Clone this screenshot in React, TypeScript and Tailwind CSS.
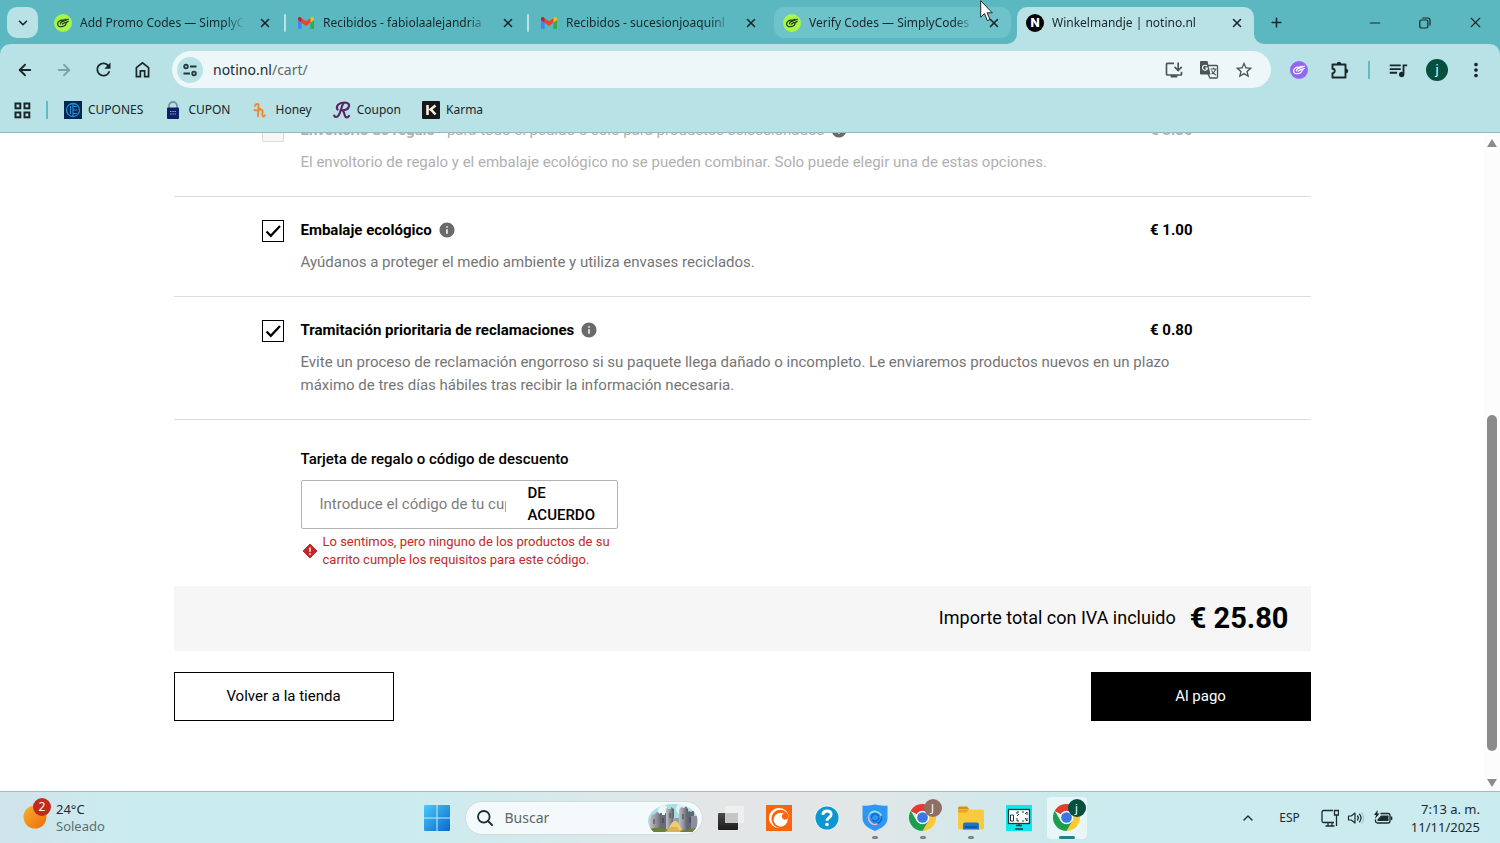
import type { ReactNode } from 'react';
import { ArrowLeft, ArrowRight, ChevronDown, ChevronUp, Minus, Plus, X } from 'lucide-react';
import { MdInfo, MdMoreVert, MdOutlineInstallDesktop, MdQueueMusic, MdRefresh, MdStarBorder } from 'react-icons/md';
import { SiCrunchyroll } from 'react-icons/si';

/* ---------- logos ---------- */

function SimplyCodesLogo({ className, tone = 'green' }: { className?: string; tone?: 'green' | 'purple' }) {
  const bg = tone === 'green' ? '#a8f64a' : '#9466f5';
  const ink = tone === 'green' ? '#1d3a1c' : '#ffffff';
  return (
    <svg viewBox="0 0 18 18" className={className} aria-hidden="true">
      <circle cx="9" cy="9" r="9" fill={bg} />
      <g fill="none" stroke={ink} strokeWidth="1.2" strokeLinecap="round" strokeLinejoin="round">
        <path d="M9.400 6.400C6.400 5.600 3.600 7.600 3.600 9.800c0 2.400 2 3.200 4 2.900 2.600-.4 4.600-2.100 4.500-4" />
        <path d="M6.400 9.800c.2-1.600 1.600-2.400 3-2.600L14.300 5.200" />
        <path d="M8.200 10.200l2.600-1.800M9.400 6.400l2.600-1.200M12 8.600l2.200-1.200" />
      </g>
    </svg>
  );
}

function GmailLogo({ className }: { className?: string }) {
  return (
    <svg viewBox="0 0 24 18" className={className} aria-hidden="true">
      <path d="M1.600 18h3.900V8.700L0 4.500v11.900C0 17.300.7 18 1.600 18z" fill="#4285f4" />
      <path d="M18.500 18h3.900c.9 0 1.600-.7 1.600-1.600V4.500l-5.500 4.200z" fill="#34a853" />
      <path d="M18.500 1.700v7L24 4.500V2.400c0-2-2.300-3.200-3.900-2z" fill="#fbbc04" />
      <path d="M5.500 8.700v-7L12 6.500l6.500-4.800v7L12 13.500z" fill="#ea4335" />
      <path d="M0 2.400v2.100l5.500 4.200v-7L3.900.5C2.300-.8 0 .4 0 2.400z" fill="#c5221f" />
    </svg>
  );
}

function ChromeLogo({ className }: { className?: string }) {
  return (
    <svg viewBox="0 0 48 48" className={className} aria-hidden="true">
      <path d="M24 24 3.200 12A24 24 0 0 1 44.800 12z" fill="#e33b2e" />
      <path d="M44.800 12A24 24 0 0 1 24 48l10.400-18L34.400 12z" fill="#fcc934" />
      <path d="M24 24v24A24 24 0 0 1 3.200 12l10.400 18z" fill="#1e9e4b" />
      <path d="M24 48l10.400-18-10.400 4-10.400-4z" fill="#1e9e4b" />
      <path d="M3.200 12 24 12h20.800L24 22z" fill="#e33b2e" />
      <circle cx="24" cy="24" r="12" fill="#fff" />
      <circle cx="24" cy="24" r="9.500" fill="#3b78e7" />
    </svg>
  );
}

function TuneIcon() {
  return (
    <svg viewBox="0 0 16 16" className="h-4 w-4" fill="none" stroke="#24363a" strokeWidth="1.800" aria-hidden="true">
      <circle cx="4" cy="4.500" r="1.800" />
      <path d="M8 4.500h6.500M1.500 11.500H8" />
      <circle cx="12" cy="11.500" r="1.800" />
    </svg>
  );
}

function TranslateIcon() {
  return (
    <svg viewBox="0 0 20 20" className="h-5 w-5" aria-hidden="true">
      <path d="M9 5.500h8.500a1 1 0 0 1 1 1V17a1 1 0 0 1-1 1h-6.500L9 14" fill="none" stroke="currentColor" strokeWidth="1.300" />
      <path d="M11.500 9h6M14.500 7.700V9M16.500 9c-.5 2.500-2 4-4 5M12.500 10.500c1 2 2.500 3.500 4.500 4.500" fill="none" stroke="currentColor" strokeWidth="1.100" />
      <path d="M2 1h6.500l3 13.500H2a1 1 0 0 1-1-1V2a1 1 0 0 1 1-1z" fill="currentColor" />
      <path d="M8 6.200a2.500 2.500 0 1 0 .5 2H6.200" fill="none" stroke="#edf7f9" strokeWidth="1.200" />
    </svg>
  );
}

function CastleArt() {
  return (
    <svg viewBox="0 0 50 28" className="h-7 w-[50px]" aria-hidden="true">
      <defs>
        <clipPath id="castleClip">
          <ellipse cx="25" cy="17" rx="25" ry="17" />
        </clipPath>
        <linearGradient id="castleStone" x1="0" x2="1" y1="0" y2="0">
          <stop offset="0" stopColor="#bfc0c8" />
          <stop offset="0.6" stopColor="#85868f" />
          <stop offset="1" stopColor="#565864" />
        </linearGradient>
      </defs>
      <g clipPath="url(#castleClip)">
        <rect width="50" height="28" fill="#a6dfe3" />
        <circle cx="15" cy="6" r="5" fill="#e9f6f8" />
        <circle cx="34" cy="5" r="6" fill="#dff2f5" />
        <path d="M2 28V15l2-4 3-1 2-2 3 2v4h3v14z" fill="url(#castleStone)" />
        <path d="M12 28V9h2v2h3V9h2v19z" fill="#696a75" />
        <path d="M18 28V5l2-2v2h3V3l3 2v23z" fill="url(#castleStone)" />
        <path d="M25 28V14h8v14z" fill="#9a9ba4" />
        <path d="M31 28V6l2-3 3 1 2-2 2 3v23z" fill="url(#castleStone)" />
        <path d="M39 28V9l2-2 2 1 3-2v22z" fill="#646773" />
        <path d="M43 28V12h6v16z" fill="#8d8f9c" />
        <path d="M6 15v5M15 14v5M22 9v5M35 10v5M42 13v6" stroke="#3b3d48" />
        <path d="M19 28l4-8c2-4 6-4 8 0l4 8z" fill="#efcd74" />
        <path d="M0 26c8-4 14-2 22 0s18 0 28-3v8H0z" fill="#6c8136" />
        <path d="M17 28l6-5h6l4 5z" fill="#dcb352" />
      </g>
    </svg>
  );
}

/* ---------- browser ---------- */

function Tab({ icon, title, state }: { icon: ReactNode; title: string; state?: 'hover' | 'active' }) {
  const bg =
    state === 'active'
      ? 'h-[37px] rounded-t-[10px] bg-[#b8e2e5] pb-[6px]'
      : state === 'hover'
        ? 'h-[31px] rounded-[10px] bg-[#6ec2ca]'
        : 'h-[31px]';
  return (
    <div className={`relative flex max-w-[237px] min-w-0 flex-1 items-center gap-2 pr-[9px] pl-[9px] ${bg}`}>
      <span className="flex w-[18px] shrink-0 justify-center">{icon}</span>
      <span className="min-w-0 flex-1 overflow-hidden [mask-image:linear-gradient(to_right,#000_88%,transparent)] text-[12px] leading-5 whitespace-nowrap">
        {title}
      </span>
      <button type="button" aria-label="Cerrar pestaña" className="ml-1 flex w-4 shrink-0 justify-center">
        <X className="h-[14px] w-[14px]" strokeWidth={2.6} />
      </button>
      {state === 'active' ? (
        <>
          <svg viewBox="0 0 10 10" className="absolute bottom-0 -left-[10px] h-[10px] w-[10px]" aria-hidden="true">
            <path d="M10 0v10H0A10 10 0 0 0 10 0z" fill="#b8e2e5" />
          </svg>
          <svg viewBox="0 0 10 10" className="absolute -right-[10px] bottom-0 h-[10px] w-[10px]" aria-hidden="true">
            <path d="M0 0v10h10A10 10 0 0 1 0 0z" fill="#b8e2e5" />
          </svg>
        </>
      ) : null}
    </div>
  );
}

function TabGap({ line }: { line?: boolean }) {
  return (
    <span className="flex h-[31px] w-[6px] shrink-0 items-center justify-center">
      {line ? <span className="h-[18px] w-[2px] rounded-full bg-[#b8e2e5]" /> : null}
    </span>
  );
}

function TabStrip() {
  return (
    <div className="flex h-11 items-start bg-[#5bb8c1] pt-[7px] pl-[7px]">
      <button
        type="button"
        aria-label="Buscar pestañas"
        className="mr-[7px] flex h-[31px] w-[31px] shrink-0 items-center justify-center rounded-[10px] bg-[#b8e2e5]"
      >
        <ChevronDown className="h-[14px] w-[14px]" strokeWidth={2.8} />
      </button>
      <Tab icon={<SimplyCodesLogo className="h-[18px] w-[18px]" />} title="Add Promo Codes — SimplyCodes" />
      <TabGap line />
      <Tab icon={<GmailLogo className="h-3 w-4" />} title="Recibidos - fabiolaalejandria" />
      <TabGap line />
      <Tab icon={<GmailLogo className="h-3 w-4" />} title="Recibidos - sucesionjoaquinl" />
      <TabGap />
      <Tab icon={<SimplyCodesLogo className="h-[18px] w-[18px]" />} title="Verify Codes — SimplyCodes" state="hover" />
      <TabGap />
      <Tab
        icon={
          <span className="flex h-[18px] w-[18px] items-center justify-center rounded-full bg-black font-['Inter',sans-serif] text-[12px] leading-none font-extrabold text-white">
            N
          </span>
        }
        title="Winkelmandje | notino.nl"
        state="active"
      />
      <button type="button" aria-label="Nueva pestaña" className="ml-[6px] flex h-[31px] w-8 items-center justify-center">
        <Plus className="h-[15px] w-[15px]" strokeWidth={2.4} />
      </button>
      <div className="ml-auto flex">
        <button type="button" aria-label="Minimizar" className="flex h-[31px] w-[51px] items-center justify-center">
          <Minus className="h-4 w-4" strokeWidth={1.8} />
        </button>
        <button type="button" aria-label="Restaurar" className="flex h-[31px] w-[50px] items-center justify-center">
          <svg viewBox="0 0 12 12" className="h-3 w-3" fill="none" stroke="currentColor" strokeWidth="1.200" aria-hidden="true">
            <rect x="0.800" y="3" width="8" height="8" rx="1.500" />
            <path d="M3.200 1h5.300c1.500 0 2.500 1 2.500 2.500v5" />
          </svg>
        </button>
        <button type="button" aria-label="Cerrar" className="flex h-[31px] w-[50px] items-center justify-center">
          <X className="h-[17px] w-[17px]" strokeWidth={1.6} />
        </button>
      </div>
    </div>
  );
}

function IconButton({ label, children, className = '' }: { label: string; children: ReactNode; className?: string }) {
  return (
    <button type="button" aria-label={label} className={`flex h-8 w-8 shrink-0 items-center justify-center ${className}`}>
      {children}
    </button>
  );
}

function Toolbar() {
  return (
    <div className="bg-[#5bb8c1]">
      <div className="flex items-center rounded-t-[10px] bg-[#b8e2e5] pt-[7px] pr-2 pl-[9px]">
        <div className="mr-[14px] flex gap-[7px]">
          <IconButton label="Atrás">
            <ArrowLeft className="h-[18px] w-[18px]" strokeWidth={2.4} />
          </IconButton>
          <IconButton label="Adelante" className="text-[#7ba3a8]">
            <ArrowRight className="h-[18px] w-[18px]" strokeWidth={2.4} />
          </IconButton>
          <IconButton label="Recargar">
            <MdRefresh className="h-[21px] w-[21px]" />
          </IconButton>
          <IconButton label="Inicio">
            <svg viewBox="0 0 16 18" className="h-[17px] w-[15px]" fill="none" stroke="currentColor" strokeWidth="1.800" aria-hidden="true">
              <path d="M1.500 7 8 1.800 14.500 7v9.500h-4.200V10.500H5.700v6H1.500z" />
            </svg>
          </IconButton>
        </div>
        <div className="flex h-[37px] min-w-0 flex-1 items-center rounded-full bg-[#edf7f9] pr-[11px] pl-[5px]">
          <button
            type="button"
            aria-label="Información del sitio"
            className="mr-[10px] flex h-[26px] w-[26px] shrink-0 items-center justify-center rounded-full bg-[#b8e2e5]"
          >
            <TuneIcon />
          </button>
          <div role="textbox" aria-label="Dirección" className="min-w-0 flex-1 text-[14px] leading-5 text-[#1d2b2e]">
            notino.nl<span className="text-[#5b6b6e]">/cart/</span>
          </div>
          <div className="flex gap-[3px] text-[#4b5557]">
            <IconButton label="Instalar">
              <MdOutlineInstallDesktop className="h-5 w-5" />
            </IconButton>
            <IconButton label="Traducir">
              <TranslateIcon />
            </IconButton>
            <IconButton label="Añadir a marcadores">
              <MdStarBorder className="h-5 w-5" />
            </IconButton>
          </div>
        </div>
        <div className="ml-3 flex items-center gap-[9px]">
          <IconButton label="SimplyCodes">
            <SimplyCodesLogo tone="purple" className="h-[18px] w-[18px]" />
          </IconButton>
          <IconButton label="Extensiones">
            <svg viewBox="0 0 20 20" className="h-5 w-5" aria-hidden="true">
              <path
                d="M2.500 4.500h13v13h-13v-4.300a2.200 2.200 0 0 0 0-4.400z"
                fill="none"
                stroke="currentColor"
                strokeWidth="1.900"
                strokeLinejoin="round"
              />
              <path d="M6.800 4a2.200 2.200 0 0 1 4.400 0zM16 8.800a2.200 2.200 0 0 1 0 4.400z" fill="currentColor" />
            </svg>
          </IconButton>
        </div>
        <span className="mx-3 h-[18px] w-[2px] bg-[#5fbcc4]" />
        <div className="flex items-center gap-[7px]">
          <IconButton label="Controles multimedia">
            <MdQueueMusic className="h-[22px] w-[22px]" />
          </IconButton>
          <IconButton label="Perfil">
            <span className="flex h-[22px] w-[22px] items-center justify-center rounded-full bg-[#04503f] text-[12px] leading-none text-white">j</span>
          </IconButton>
          <IconButton label="Menú">
            <MdMoreVert className="h-[22px] w-[22px]" />
          </IconButton>
        </div>
      </div>
    </div>
  );
}

function Bookmark({ icon, label }: { icon: ReactNode; label: string }) {
  return (
    <a href="#" className="flex items-center gap-[6px] text-[12px] leading-5">
      {icon}
      {label}
    </a>
  );
}

function BookmarksBar() {
  return (
    <nav className="flex h-[45px] items-center border-b border-[#93b9bc] bg-[#b8e2e5] pl-[14px]">
      <button type="button" aria-label="Aplicaciones">
        <svg viewBox="0 0 17 17" className="h-[17px] w-[17px]" fill="none" stroke="currentColor" strokeWidth="2" aria-hidden="true">
          <rect x="1.500" y="1.500" width="4.800" height="4.800" />
          <rect x="10.500" y="1.500" width="4.800" height="4.800" />
          <rect x="1.500" y="10.500" width="4.800" height="4.800" />
          <rect x="10.500" y="10.500" width="4.800" height="4.800" />
        </svg>
      </button>
      <span className="mr-4 ml-[15px] h-[18px] w-[2px] bg-[#5fbcc4]" />
      <div className="flex gap-[21px]">
        <Bookmark
          label="CUPONES"
          icon={
            <svg viewBox="0 0 18 18" className="h-[18px] w-[18px]" aria-hidden="true">
              <rect width="18" height="18" fill="#05264f" />
              <circle cx="9" cy="9" r="6.500" fill="none" stroke="#1d8fd6" strokeWidth="1.300" />
              <path d="M9 3v12M9 5.500h4M9 9h4.500M9 12.500h4M6.500 5v8" stroke="#1d8fd6" strokeWidth="1.200" />
            </svg>
          }
        />
        <Bookmark
          label="CUPON"
          icon={
            <svg viewBox="0 0 18 18" className="h-[18px] w-[18px]" aria-hidden="true">
              <path d="M5 8V5a4 4 0 0 1 8 0v3" fill="none" stroke="#7495a8" strokeWidth="1.800" />
              <rect x="3" y="6.500" width="12" height="11.500" rx="1" fill="#0d1f66" />
              <path d="M6 10.500h6M6 13h6" stroke="#8fa0d8" strokeWidth="1.200" strokeDasharray="1.500 .8" />
            </svg>
          }
        />
        <Bookmark
          label="Honey"
          icon={
            <svg viewBox="0 0 18 18" className="h-[18px] w-[18px]" fill="none" stroke="#f0892d" strokeWidth="1.900" strokeLinecap="round" aria-hidden="true">
              <path d="M4 5C4.500 3 7.500 2 7.500 4.300c0 3-.5 7.500-.5 11M7.100 10.500c1.800-2.600 4.900-2.600 4.500.5-.2 1.800-.6 3.500.3 4.300 1 .5 1.600-.2 2-1M3.300 9c2.200.8 4.600.1 6-1.400" />
            </svg>
          }
        />
        <Bookmark
          label="Coupon"
          icon={
            <svg viewBox="0 0 18 18" className="h-[18px] w-[18px]" fill="none" stroke="#5c2468" strokeWidth="2.200" strokeLinecap="round" aria-hidden="true">
              <path d="M4.500 8.500C2.500 5 6 1.500 11 1.500c4 0 5.500 1.500 5 3.800-.5 2.400-3.500 4-7 4M10.500 2C8 6 8 11 5.500 14.500 4.200 16.500 1.500 16.500 1.200 14.500M10 9.500c1.500 1.500 1.200 6 3 6.800 1.400.5 2.500-.5 3-1.300" />
            </svg>
          }
        />
        <Bookmark
          label="Karma"
          icon={
            <svg viewBox="0 0 18 18" className="h-[18px] w-[18px]" aria-hidden="true">
              <rect width="18" height="18" rx="1" fill="#15171a" />
              <path d="M5.500 4v10M13.500 4.500l-6 4.800M9 8.500l4.500 5" fill="none" stroke="#f6efdc" strokeWidth="2.600" />
            </svg>
          }
        />
      </div>
    </nav>
  );
}

/* ---------- cart page ---------- */

function CartOption({
  id,
  title,
  note,
  price,
  children,
  checked = false,
  disabled = false,
}: {
  id: string;
  title: string;
  note?: string;
  price: string;
  children: ReactNode;
  checked?: boolean;
  disabled?: boolean;
}) {
  const tone = disabled ? 'text-[#b0b0b0]' : 'text-black';
  return (
    <div className="flex gap-[17px] border-b border-[#dcdcdc] pt-[22px] pr-[118px] pb-[22px] pl-[88px] leading-[23px]">
      <span className="relative mt-px h-[22px] w-[22px] shrink-0">
        <input
          id={id}
          type="checkbox"
          defaultChecked={checked}
          disabled={disabled}
          className="block h-[22px] w-[22px] appearance-none border border-black disabled:border-[#dcdcdc] disabled:bg-[#f7f7f7]"
        />
        {checked ? (
          <svg viewBox="0 0 22 22" className="pointer-events-none absolute inset-0 h-[22px] w-[22px]" aria-hidden="true">
            <path d="M4.500 11.500l4.300 4.300L18 6" fill="none" stroke="#000" strokeWidth="2.200" />
          </svg>
        ) : null}
      </span>
      <div className="min-w-0 flex-1">
        <div className={`flex h-[23px] items-center ${tone}`}>
          <label htmlFor={id} className="font-bold">
            {title}
          </label>
          {note ? <span className="ml-1">{note}</span> : null}
          <MdInfo className="mb-px ml-[6px] h-[18px] w-[18px] text-[#6a6a6a]" />
          <span className="ml-auto font-bold">{price}</span>
        </div>
        <p className={`mt-[9px] ${disabled ? 'text-[#b0b0b0]' : 'text-[#757575]'}`}>{children}</p>
      </div>
    </div>
  );
}

function CouponForm() {
  return (
    <form className="mb-[17px] ml-[127px] w-[317px] pt-7" onSubmit={(e) => e.preventDefault()}>
      <label htmlFor="coupon" className="block leading-[23px] font-medium">
        Tarjeta de regalo o código de descuento
      </label>
      <div className="mt-[9px] flex h-[49px] items-center rounded-[2px] border border-[#b3b3b3] pl-[18px]">
        <input
          id="coupon"
          placeholder="Introduce el código de tu cupón"
          className="w-[186px] outline-none placeholder:text-[#7d7d7d]"
        />
        <button type="submit" className="mb-[2px] ml-[22px] w-[72px] text-left leading-[22px] font-medium">
          DE ACUERDO
        </button>
      </div>
      <p role="alert" className="mt-1 flex items-center gap-1 text-[13px] leading-[18px] text-[#c62828]">
        <svg viewBox="0 0 18 18" className="h-[18px] w-[18px] shrink-0" aria-hidden="true">
          <path d="M9 2l7 7-7 7-7-7z" fill="#c62828" stroke="#c62828" strokeLinejoin="round" />
          <path d="M9 5.500v4.300M9 11.200v1.500" stroke="#fff" strokeWidth="1.500" />
        </svg>
        <span>Lo sentimos, pero ninguno de los productos de su carrito cumple los requisitos para este código.</span>
      </p>
    </form>
  );
}

function CartPage() {
  return (
    <main className="flex min-w-0 flex-1 flex-col justify-end overflow-hidden bg-white pb-[70px] font-['Roboto',sans-serif] text-[15px] text-black">
      <div className="mx-auto w-full max-w-[1137px]">
        <CartOption
          id="gift"
          title="Envoltorio de regalo"
          note="- para todo el pedido o solo para productos seleccionados"
          price="€ 3.30"
          disabled
        >
          El envoltorio de regalo y el embalaje ecológico no se pueden combinar. Solo puede elegir una de estas opciones.
        </CartOption>
        <CartOption id="eco" title="Embalaje ecológico" price="€ 1.00" checked>
          Ayúdanos a proteger el medio ambiente y utiliza envases reciclados.
        </CartOption>
        <CartOption id="claims" title="Tramitación prioritaria de reclamaciones" price="€ 0.80" checked>
          Evite un proceso de reclamación engorroso si su paquete llega dañado o incompleto. Le enviaremos productos nuevos en
          un plazo máximo de tres días hábiles tras recibir la información necesaria.
        </CartOption>
        <CouponForm />
        <div className="flex h-[65px] items-center justify-end gap-[14px] bg-[#f6f6f6] pr-[22px] pb-[2px]">
          <span className="text-[18px]">Importe total con IVA incluido</span>
          <strong className="text-[29px] leading-8 font-bold">€ 25.80</strong>
        </div>
        <div className="mt-[21px] flex justify-between">
          <button type="button" className="h-[49px] w-[220px] border border-black bg-white">
            Volver a la tienda
          </button>
          <button type="button" className="h-[49px] w-[220px] bg-black text-white">
            Al pago
          </button>
        </div>
      </div>
    </main>
  );
}

function Scrollbar() {
  return (
    <div className="flex w-4 shrink-0 flex-col items-center bg-[#fcfcfc] pt-[6px] pb-1" aria-hidden="true">
      <svg viewBox="0 0 10 8" className="h-2 w-[10px]">
        <path d="M5 0l5 8H0z" fill="#8b8b8b" />
      </svg>
      <span className="min-h-0 flex-[268]" />
      <span className="min-h-0 w-[10px] flex-[336] rounded-full bg-[#8b8b8b]" />
      <span className="min-h-0 flex-[28]" />
      <svg viewBox="0 0 10 8" className="h-2 w-[10px]">
        <path d="M5 8l5-8H0z" fill="#8b8b8b" />
      </svg>
    </div>
  );
}

/* ---------- taskbar ---------- */

function TaskbarApp({ label, children, running }: { label: string; children: ReactNode; running?: 'idle' | 'active' }) {
  return (
    <button
      type="button"
      aria-label={label}
      className={`relative flex h-[42px] w-10 shrink-0 items-center justify-center rounded-[4px] ${running === 'active' ? 'bg-[#e8f6f7]' : ''}`}
    >
      {children}
      {running === 'idle' ? <span className="absolute bottom-0 h-[3px] w-[6px] rounded-full bg-[#7d8587]" /> : null}
      {running === 'active' ? <span className="absolute bottom-0 h-[3px] w-4 rounded-full bg-[#227f8c]" /> : null}
    </button>
  );
}

function ProfileBadge({ letter, className }: { letter: string; className: string }) {
  return (
    <span
      className={`absolute top-[2px] left-[21px] flex h-[18px] w-[18px] items-center justify-center rounded-full text-[11px] leading-none text-white ${className}`}
    >
      {letter}
    </span>
  );
}

function Taskbar() {
  return (
    <footer className="flex h-[52px] shrink-0 items-center border-t border-[#9fbdbc] bg-[linear-gradient(to_right,#cfe3ea,#cbecef_8%,#cbecef_27%,#e3e6e7_47%,#e1e6e7_58%,#cbeaed_70%,#cbecef)] text-[#1c2b2e]">
      <div className="flex flex-1 items-center pl-[23px] text-[13px] leading-[17px]">
        <div className="relative mr-[7px] h-[34px] w-[26px]">
          <svg viewBox="0 0 24 24" className="mt-1 h-6 w-6" aria-hidden="true">
            <defs>
              <linearGradient id="sun" x1="0" x2="1" y1="0" y2="1">
                <stop offset="0" stopColor="#f7b32b" />
                <stop offset="1" stopColor="#ee6a0c" />
              </linearGradient>
            </defs>
            <circle cx="12" cy="12" r="11.500" fill="url(#sun)" />
          </svg>
          <span className="absolute -top-[3px] left-[10px] flex h-[18px] w-[18px] items-center justify-center rounded-full bg-[#c02b1d] text-[12px] leading-none text-white">
            2
          </span>
        </div>
        <div>
          <div>24°C</div>
          <div className="text-[#5a6f73]">Soleado</div>
        </div>
      </div>

      <div className="flex items-center gap-2">
        <TaskbarApp label="Inicio">
          <svg viewBox="0 0 26 26" className="h-[26px] w-[26px]" aria-hidden="true">
            <defs>
              <linearGradient id="win" x1="0" x2="1" y1="0" y2="1">
                <stop offset="0" stopColor="#4cc9f7" />
                <stop offset="1" stopColor="#0867cf" />
              </linearGradient>
            </defs>
            <path d="M0 1a1 1 0 0 1 1-1h11.500v12.500H0zM13.500 0H25a1 1 0 0 1 1 1v11.500H13.500zM0 13.500h12.500V26H1a1 1 0 0 1-1-1zM13.500 13.500H26V25a1 1 0 0 1-1 1H13.500z" fill="url(#win)" />
          </svg>
        </TaskbarApp>
        <label className="flex h-[34px] w-[238px] items-center rounded-full border border-[#cfdcde] bg-[#f4fafb] pr-1 pl-[11px]">
          <svg viewBox="0 0 16 16" className="mr-3 h-4 w-4 shrink-0" fill="none" stroke="currentColor" strokeWidth="1.800" strokeLinecap="round" aria-hidden="true">
            <circle cx="6.800" cy="6.800" r="5.800" />
            <path d="M11 11l4 4" />
          </svg>
          <input
            aria-label="Buscar"
            placeholder="Buscar"
            className="min-w-0 flex-1 text-[14px] outline-none placeholder:text-[#5c6769]"
          />
          <CastleArt />
        </label>
        <TaskbarApp label="Vista de tareas">
          <svg viewBox="0 0 28 26" className="h-[26px] w-7" aria-hidden="true">
            <defs>
              <linearGradient id="tv" x1="0" x2="0" y1="0" y2="1">
                <stop offset="0" stopColor="#4a4a4a" />
                <stop offset="1" stopColor="#1b1b1b" />
              </linearGradient>
            </defs>
            <rect x="1" y="8" width="20" height="17" rx="1" fill="url(#tv)" />
            <rect x="8" y="1" width="19" height="17" rx="1" fill="#f0f0f0" fillOpacity="0.85" />
            <path d="M8 8h13v10H8z" fill="#c6c6c6" />
          </svg>
        </TaskbarApp>
        <TaskbarApp label="Crunchyroll">
          <span className="flex h-[26px] w-[26px] items-center justify-center bg-[#f9660d]">
            <SiCrunchyroll className="h-5 w-5 text-white" />
          </span>
        </TaskbarApp>
        <TaskbarApp label="Ayuda">
          <svg viewBox="0 0 26 26" className="h-[26px] w-[26px]" aria-hidden="true">
            <circle cx="13" cy="13" r="12.500" fill="#e9f3f6" />
            <circle cx="13" cy="13" r="11.500" fill="#0c97d3" />
            <path d="M8.800 9.800C9 7.200 10.800 6 13 6c2.400 0 4.200 1.400 4.200 3.600 0 3-4.200 3.200-4.200 6.200" fill="none" stroke="#fff" strokeWidth="2.800" />
            <circle cx="13" cy="19.500" r="1.800" fill="#fff" />
          </svg>
        </TaskbarApp>
        <TaskbarApp label="Hotspot Shield" running="idle">
          <svg viewBox="0 0 26 27" className="h-[27px] w-[26px]" aria-hidden="true">
            <path d="M.5 1.500C5 2 9 1.500 13 .5c4 1 8 1.500 12.500 1v12.500c0 6-5 10-12.500 13C5.500 24 .5 20 .5 14z" fill="#2f97f3" />
            <g fill="none" strokeWidth="1.500" strokeLinecap="round">
              <path d="M6.500 14A6.500 6.500 0 0 1 13 7.200" stroke="#8fd0ff" />
              <path d="M9 8.600c4.500-3 11 .4 10.500 5.900" stroke="#8ef0d4" />
              <path d="M19.500 12.500c1 4.500-3.500 8-7.500 7" stroke="#1762cc" />
              <path d="M15 20c-4.500 1.500-8.500-2-8.500-6" stroke="#f0b7c4" />
              <path d="M9.500 13.500a3.700 3.700 0 0 1 7-1.500M16.800 14a3.700 3.700 0 0 1-6.500 2" stroke="#1565cf" />
            </g>
          </svg>
        </TaskbarApp>
        <TaskbarApp label="Google Chrome, perfil J" running="idle">
          <ChromeLogo className="h-[27px] w-[27px]" />
          <ProfileBadge letter="J" className="bg-[#8f6e66]" />
        </TaskbarApp>
        <TaskbarApp label="Explorador de archivos" running="idle">
          <svg viewBox="0 0 28 26" className="h-[26px] w-7" aria-hidden="true">
            <path d="M1 3a1.500 1.500 0 0 1 1.500-1.500H10l2.500 3H1z" fill="#d4940f" />
            <path d="M1 4.500h24.500A1.500 1.500 0 0 1 27 6v17a1.500 1.500 0 0 1-1.500 1.500h-23A1.500 1.500 0 0 1 1 23z" fill="#f9cb3c" />
            <path d="M1 4.500h11l-2 3H1z" fill="#e5a61c" />
            <path d="M6 24.500v-5a2 2 0 0 1 2-2h12a2 2 0 0 1 2 2v5z" fill="#1a74c9" />
            <path d="M8 22h12" stroke="#0e4f96" strokeWidth="1.500" />
          </svg>
        </TaskbarApp>
        <TaskbarApp label="Grabador de pantalla">
          <svg viewBox="0 0 26 26" className="h-[26px] w-[26px]" aria-hidden="true">
            <rect width="26" height="26" fill="#0fe6ee" />
            <rect x="2.500" y="4.500" width="21" height="14" fill="#fff" stroke="#24383b" strokeWidth="1.300" />
            <path d="M10 20.500h6M13 18v3M9 24h8" stroke="#24383b" strokeWidth="1.400" />
            <path d="M11 9V7h2M11 11l2-2M16 7h2M21 7v3M11 13v3h2M16 16h2M21 13v3M19 9l2-2M19 13l2 3M4.500 10h3v6h-3z" fill="none" stroke="#24383b" />
          </svg>
        </TaskbarApp>
        <TaskbarApp label="Google Chrome, perfil j" running="active">
          <ChromeLogo className="h-[27px] w-[27px]" />
          <ProfileBadge letter="j" className="bg-[#04503f]" />
        </TaskbarApp>
      </div>

      <div className="flex flex-1 items-center justify-end pr-5 text-[13px] leading-[18px]">
        <button type="button" aria-label="Mostrar iconos ocultos" className="mr-[23px]">
          <ChevronUp className="h-4 w-4" strokeWidth={2} />
        </button>
        <span className="mr-[21px] text-[12px]">ESP</span>
        <div className="mr-[18px] flex items-center gap-2">
          <svg viewBox="0 0 18 18" className="h-[18px] w-[18px]" fill="none" stroke="currentColor" strokeWidth="1.300" aria-hidden="true">
            <path d="M12 1.500H2.500a1.500 1.500 0 0 0-1.500 1.500v9a1.500 1.500 0 0 0 1.500 1.500H13M4.500 17h9M7 13.500V17M11 13.500V17" />
            <path d="M13.500 1.500h4v4.500h-4zM15.500 6v11" />
          </svg>
          <svg viewBox="0 0 18 18" className="h-[18px] w-[18px]" fill="none" stroke="currentColor" strokeWidth="1.200" strokeLinejoin="round" strokeLinecap="round" aria-hidden="true">
            <path d="M1.500 7v4h2.700L8 14V4L4.200 7zM10.500 7a3 3 0 0 1 0 4M12.500 5.200a6 6 0 0 1 0 7.600" />
            <path d="M14.700 3.800a8 8 0 0 1 0 10.400" stroke="#a9c4c7" />
          </svg>
          <svg viewBox="0 0 20 18" className="h-[18px] w-5" aria-hidden="true">
            <path d="M7.500 4.500H15a2 2 0 0 1 2 2V12a2 2 0 0 1-2 2H4.500a2 2 0 0 1-2-2v-1.500" fill="none" stroke="currentColor" strokeWidth="1.300" />
            <path d="M18.500 7.500v3.500" stroke="currentColor" strokeWidth="1.600" />
            <path d="M8 6.500h7.500V12H4.500v-1.500z" fill="currentColor" />
            <path d="M4.500 1 1 6h2L2 10l4.500-5.500h-2z" fill="currentColor" />
          </svg>
        </div>
        <div className="text-right">
          <div>7:13 a. m.</div>
          <div>11/11/2025</div>
        </div>
      </div>
    </footer>
  );
}

export default function App() {
  return (
    <div className="relative flex h-screen flex-col overflow-hidden font-['Noto_Sans',sans-serif] text-[#1a2629]">
      <header className="shrink-0">
        <TabStrip />
        <Toolbar />
        <BookmarksBar />
      </header>
      <div className="flex min-h-0 flex-1">
        <CartPage />
        <Scrollbar />
      </div>
      <Taskbar />
      {/* mouse pointer */}
      <svg viewBox="0 0 13 22" className="pointer-events-none absolute top-0 left-[980px] h-[22px] w-[13px]" aria-hidden="true">
        <path d="M.7.700v16.500l3.800-3.600 2.800 7 2.700-1.100-2.900-6.700h5.200z" fill="#fff" stroke="#222" />
      </svg>
    </div>
  );
}
